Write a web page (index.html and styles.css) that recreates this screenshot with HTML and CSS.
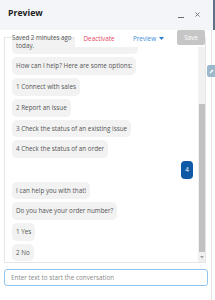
FILE: index.html
```html
<!DOCTYPE html>
<html lang="en">
<head>
<meta charset="utf-8">
<title>Preview</title>
<link rel="stylesheet" href="styles.css">
</head>
<body>
<div class="header">
  <div class="title">Preview</div>
  <div class="win-actions">
    <svg class="ico-min" width="6" height="7" viewBox="0 0 6 7"><line x1="0" y1="6.5" x2="6" y2="6.5" stroke="#6b6b6b" stroke-width="1"/></svg>
    <svg class="ico-close" width="5" height="5" viewBox="0 0 5 5"><path d="M0.5 0.5L4.5 4.5M4.5 0.5L0.5 4.5" stroke="#6b6b6b" stroke-width="0.9" fill="none"/></svg>
  </div>
</div>
<div class="panel">
  <div class="chat">
    <div class="messages">
      <div class="thread">
        <div class="bubble intro">Hello! Thanks for contacting us<br>today.</div>
        <div class="bubble">How can I help? Here are some options:</div>
        <div class="bubble">1 Connect with sales</div>
        <div class="bubble">2 Report an issue</div>
        <div class="bubble">3 Check the status of an existing issue</div>
        <div class="bubble">4 Check the status of an order</div>
        <div class="bubble user">4</div>
        <div class="bubble">I can help you with that!</div>
        <div class="bubble">Do you have your order number?</div>
        <div class="bubble">1 Yes</div>
        <div class="bubble">2 No</div>
        <div class="bubble">3 I'm not sure</div>
      </div>
    </div>
    <div class="scrollbar">
      <div class="thumb"></div>
      <div class="arrow"><svg width="4" height="3" viewBox="0 0 4 3"><path d="M0 0H4L2 2.5Z" fill="#a0a0a0"/></svg></div>
    </div>
  </div>
  <input class="composer" type="text" placeholder="Enter text to start the conversation">
  <div class="toolbar">
    <div class="saved">Saved 2 minutes ago</div>
    <div class="btn-group">
      <div class="btn btn-deactivate">Deactivate</div>
      <div class="btn btn-preview">Preview <svg width="5" height="3" viewBox="0 0 5 3"><path d="M0 0H5L2.5 3Z" fill="#2c7cd0"/></svg></div>
      <div class="btn btn-save">Save</div>
    </div>
  </div>
  <div class="side-tab"><svg width="5" height="5" viewBox="0 0 5 5"><path d="M0.5 4.5L1 3L3.5 0.5L4.5 1.5L2 4Z" fill="#ffffff"/></svg></div>
</div>
</body>
</html>
```
FILE: styles.css
```css
* { box-sizing: border-box; }
html, body { margin: 0; padding: 0; }
body {
  width: 215px;
  height: 300px;
  overflow: hidden;
  background: #ffffff;
  font-family: "Open Sans", "Noto Sans", sans-serif;
  color: #555555;
}
.header {
  height: 30px;
  display: flex;
  align-items: flex-start;
  padding: 0 13px 0 8px;
  background: #f3f5f8;
  border-right: 2px solid #607287;
}
.title {
  margin-top: 8.4px;
  font-size: 8.7px;
  line-height: 11px;
  font-weight: 700;
  color: #222222;
}
.win-actions {
  margin-left: auto;
  margin-top: 11px;
  display: flex;
  align-items: flex-start;
  gap: 11px;
}
.ico-min, .ico-close { display: block; }
.ico-close { margin-top: 0.7px; }

.panel {
  position: relative;
  width: 212px;
  height: 270px;
  padding: 7px 0 0 4px;
  border-right: 1px solid #e6e6e6;
}
.chat {
  width: 202px;
  height: 226px;
  border: 1px solid #e6e6e6;
  display: flex;
  background: #ffffff;
}
.messages {
  flex: 1;
  overflow: hidden;
  padding: 0 5px 0 7px;
}
.thread {
  margin-top: -11px;
  display: flex;
  flex-direction: column;
  align-items: flex-start;
  gap: 3px;
}
.bubble {
  background: #f2f2f2;
  border-radius: 5px;
  padding: 4px;
  font-size: 6.3px;
  line-height: 9.7px;
  color: #555555;
  white-space: nowrap;
}
.bubble.intro { width: 126px; }
.bubble.user {
  align-self: flex-end;
  background: #0f5aa6;
  color: #ffffff;
  padding: 4px 4.2px;
  border-radius: 4px;
}
.scrollbar {
  width: 7px;
  background: #f1f1f1;
  display: flex;
  flex-direction: column;
}
.thumb {
  margin-top: 66px;
  margin-left: 1px;
  width: 6px;
  height: 148px;
  background: #c1c1c1;
}
.arrow {
  flex: 1;
  display: flex;
  align-items: center;
  justify-content: center;
}
.arrow svg { display: block; }

.composer {
  display: block;
  margin: 6px 0 0 0;
  width: 204px;
  height: 17px;
  border: 1px solid #8ec4ef;
  border-radius: 3px;
  padding: 0 6px;
  font-family: "Open Sans", "Noto Sans", sans-serif;
  font-size: 6.35px;
  line-height: 9px;
  color: #555555;
  background: #ffffff;
  outline: none;
}
.composer::placeholder { color: #8a8a8a; }

.toolbar {
  position: absolute;
  top: 0;
  left: 12px;
  right: 6px;
  display: flex;
  align-items: flex-start;
}
.saved {
  margin-top: 3px;
  font-size: 6.2px;
  line-height: 9px;
  color: #555555;
}
.btn-group {
  margin-left: auto;
  display: flex;
  align-items: flex-start;
  background: #ffffff;
}
.btn {
  height: 17px;
  display: flex;
  align-items: center;
  justify-content: center;
  background: #ffffff;
  font-size: 6.3px;
  line-height: 9px;
}
.btn-deactivate { width: 48px; color: #e8465c; }
.btn-preview { width: 45px; margin-left: 3px; color: #3d8ed8; gap: 3px; }
.btn-preview svg { display: block; }
.btn-save {
  width: 28px;
  height: 15px;
  margin-left: 6px;
  background: #c6c6c6;
  color: #ffffff;
  border-radius: 2px;
}
.side-tab {
  position: absolute;
  left: 207px;
  top: 35px;
  width: 8px;
  height: 12px;
  background: #9cb8cc;
  border-radius: 2px 0 0 2px;
  display: flex;
  align-items: center;
  justify-content: flex-start;
  padding-left: 1.5px;
}
.side-tab svg { display: block; }
```
